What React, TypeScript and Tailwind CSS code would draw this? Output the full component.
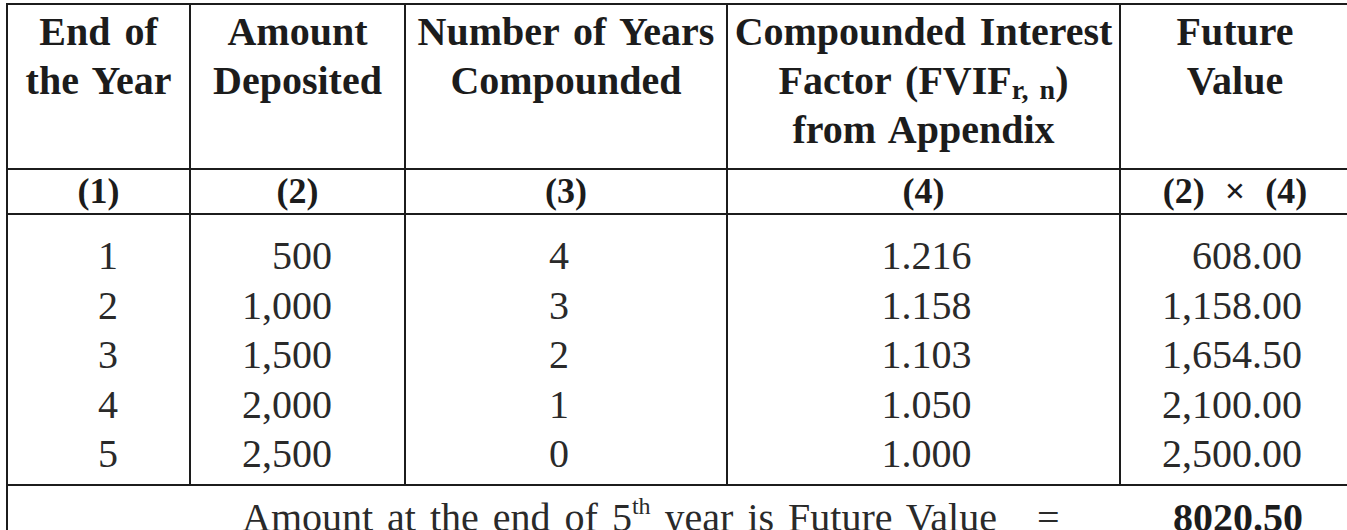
import React from "react";

const rows = [
  ["1", "500", "4", "1.216", "608.00"],
  ["2", "1,000", "3", "1.158", "1,158.00"],
  ["3", "1,500", "2", "1.103", "1,654.50"],
  ["4", "2,000", "1", "1.050", "2,100.00"],
  ["5", "2,500", "0", "1.000", "2,500.00"],
];

// per-column alignment of the data block
const dataCols = [
  "text-center pl-[19px]",
  "text-right pr-[72px]",
  "text-center pr-[14px]",
  "text-center pl-[6px]",
  "text-right pr-[47px]",
];

const cell = "border-l-2 border-t-2 border-[#1c1c1c]";

function HeadCell({ lines, last }: { lines: React.ReactNode[]; last?: boolean }) {
  return (
    <div
      className={`${cell} ${last ? "border-r-2" : ""} pt-[2px] text-center text-[40px] leading-[49px] font-bold [word-spacing:4px]`}
    >
      {lines.map((l, i) => (
        <div key={i} className="whitespace-nowrap">
          {l}
        </div>
      ))}
    </div>
  );
}

function NumCell({ label, last }: { label: React.ReactNode; last?: boolean }) {
  return (
    <div
      className={`${cell} ${last ? "border-r-2" : ""} flex items-center justify-center text-[36px] leading-[43px] font-bold`}
    >
      {label}
    </div>
  );
}

export default function App() {
  return (
    <div className="h-[530px] w-[1347px] overflow-hidden bg-white pl-[6px] pt-[3px] font-['Liberation_Serif',serif] text-[#1c1c1c]">
      <div className="grid w-[1345px] grid-cols-[183px_215px_322px_393px_232px] grid-rows-[165px_45px_271px_80px]">
        <HeadCell lines={["End of", "the Year"]} />
        <HeadCell lines={["Amount", "Deposited"]} />
        <HeadCell lines={["Number of Years", "Compounded"]} />
        <HeadCell
          lines={[
            "Compounded Interest",
            <>
              Factor (FVIF
              <span className="relative top-[5px] text-[28px] leading-none">r, n</span>)
            </>,
            "from Appendix",
          ]}
        />
        <HeadCell lines={["Future", "Value"]} last />

        <NumCell label="(1)" />
        <NumCell label="(2)" />
        <NumCell label="(3)" />
        <NumCell label="(4)" />
        <NumCell
          last
          label={
            <span className="flex items-center gap-[20px]">
              <span>(2)</span>
              <span>×</span>
              <span>(4)</span>
            </span>
          }
        />

        {dataCols.map((align, c) => (
          <div
            key={c}
            className={`${cell} ${c === 4 ? "border-r-2" : ""} ${align} pt-[16px] text-[40px] leading-[49.5px] text-[#2a2a2a]`}
          >
            {rows.map((r) => (
              <div key={r[0]}>{r[c]}</div>
            ))}
          </div>
        ))}

        <div
          className={`${cell} col-span-5 flex items-baseline border-r-2 pt-[7px] text-[40px] leading-[49.5px] text-[#2a2a2a]`}
        >
          <span className="w-[1029px] whitespace-nowrap pl-[234px] [word-spacing:4px]">
            Amount at the end of 5
            <span className="relative -top-[17px] text-[24px] leading-none">th</span> year is
            Future Value
          </span>
          <span>=</span>
          <span className="flex-1 pr-[46px] text-right font-bold text-[#1c1c1c]">8020.50</span>
        </div>
      </div>
    </div>
  );
}
